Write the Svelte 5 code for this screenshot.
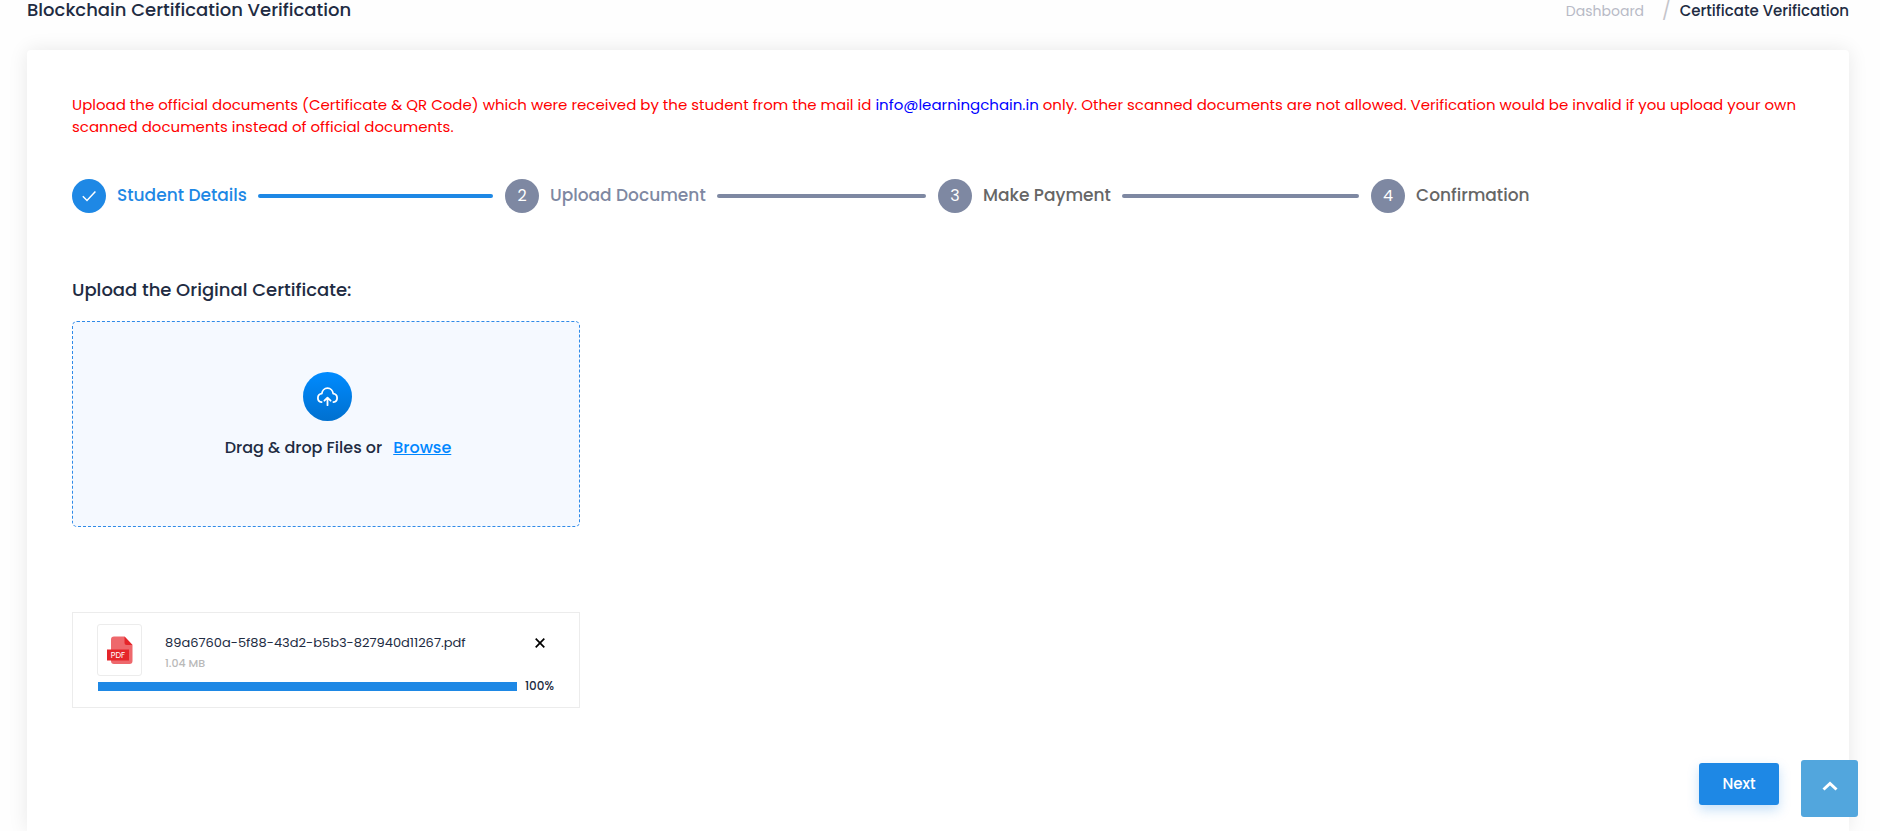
<script lang="ts">
	interface Step {
		label: string;
		state: 'done' | 'current' | 'todo';
	}

	const steps: Step[] = [
		{ label: 'Student Details', state: 'done' },
		{ label: 'Upload Document', state: 'current' },
		{ label: 'Make Payment', state: 'todo' },
		{ label: 'Confirmation', state: 'todo' }
	];

	let file = $state<{ name: string; size: string; progress: number } | null>({
		name: '89a6760a-5f88-43d2-b5b3-827940d11267.pdf',
		size: '1.04 MB',
		progress: 100
	});

	function handleFileChange(event: Event) {
		const picked = (event.currentTarget as HTMLInputElement).files?.[0];
		if (!picked) return;
		file = { name: picked.name, size: `${(picked.size / 1048576).toFixed(2)} MB`, progress: 100 };
	}

	function scrollToTop() {
		window.scrollTo({ top: 0, behavior: 'smooth' });
	}
</script>

<div class="page">
	<header>
		<h1>Blockchain Certification Verification</h1>
		<nav aria-label="Breadcrumb">
			<a href="#dashboard">Dashboard</a>
			<span class="slash">/</span>
			<span class="here">Certificate Verification</span>
		</nav>
	</header>

	<main class="card">
		<p class="notice">
			Upload the official documents (Certificate &amp; QR Code) which were received by the student from the mail id
			<a href="mailto:info@learningchain.in">info@learningchain.in</a> only. Other scanned documents are not allowed. Verification would be invalid if you upload your own scanned documents instead of official documents.
		</p>

		<ol class="steps">
			{#each steps as step, i}
				<li class={step.state}>
					<span class="dot">
						{#if step.state === 'done'}
							<svg width="16" height="16" viewBox="0 0 16 16" fill="none" stroke="#fff" stroke-width="1.5">
								<path d="M1.8 8.3l4.2 4.2 8.4-9" />
							</svg>
						{:else}
							{i + 1}
						{/if}
					</span>
					<span class="label">{step.label}</span>
					{#if i < steps.length - 1}
						<span class="line"></span>
					{/if}
				</li>
			{/each}
		</ol>

		<section class="upload">
			<h2>Upload the Original Certificate:</h2>
			<div class="dropzone">
				<svg class="cloud" width="49" height="49" viewBox="0 0 49 49" fill="none">
					<defs>
						<linearGradient id="cloud-bg" x1="0" y1="0" x2="0" y2="1">
							<stop offset="0" stop-color="#008bff" />
							<stop offset="1" stop-color="#0070cf" />
						</linearGradient>
					</defs>
					<circle cx="24.5" cy="24.5" r="24.5" fill="url(#cloud-bg)" />
					<g stroke="#fff" stroke-width="1.8" stroke-linecap="round" stroke-linejoin="round">
						<path d="M18.6 30.2c-2.2-.4-3.7-2.2-3.7-4.3 0-2.300 1.700-4.100 3.900-4.200.3-3.100 2.700-5.500 5.700-5.500s5.400 2.400 5.700 5.500c2.200.1 3.900 1.900 3.900 4.200 0 2.100-1.500 3.900-3.700 4.300" />
						<path d="M24.500 33.200v-7.200M21.400 28.700l3.100-3.100 3.100 3.100" />
					</g>
				</svg>
				<div class="prompt">
					<span>Drag &amp; drop Files or</span>
					<label>
						Browse
						<input type="file" accept="application/pdf" onchange={handleFileChange} />
					</label>
				</div>
			</div>

			{#if file}
				<div class="file">
					<div class="file-top">
						<span class="thumb">
							<svg width="26" height="28" viewBox="0 0 26 28">
								<path d="M7 0.500h10.500l8 8.500v16a3 3 0 0 1-3 3H7a3 3 0 0 1-3-3v-21.500a3 3 0 0 1 3-3z" fill="#ee686c" />
								<path d="M17.500 0.500l8 8.500h-6a2 2 0 0 1-2-2z" fill="#e5252a" />
								<rect y="13.500" width="22" height="11" fill="#e5252a" />
								<text x="11" y="22" text-anchor="middle" font-size="8" fill="#fff">PDF</text>
							</svg>
						</span>
						<div class="meta">
							<span class="name">{file.name}</span>
							<span class="size">{file.size}</span>
						</div>
						<button class="remove" type="button" aria-label={`Remove ${file.name}`} onclick={() => (file = null)}>
							<svg width="10" height="10" viewBox="0 0 10 10" stroke="#000" stroke-width="1.7">
								<path d="M0.700 0.700l8.600 8.600M9.300 0.700l-8.600 8.600" />
							</svg>
						</button>
					</div>
					<div class="file-progress">
						<div class="track">
							<div class="fill" style={`width:${file.progress}%`}></div>
						</div>
						<span>{file.progress}%</span>
					</div>
				</div>
			{/if}
		</section>

		<div class="actions">
			<button class="next" type="button">Next</button>
		</div>
	</main>

	<button class="to-top" type="button" aria-label="Back to top" onclick={scrollToTop}>
		<svg width="16" height="10" viewBox="0 0 16 10" fill="none" stroke="#fff" stroke-width="3">
			<path d="M1.500 8.500l6.500-6 6.500 6" />
		</svg>
	</button>
</div>

<style>
	:global(body) {
		margin: 0;
		background: #fefefe;
	}

	.page {
		box-sizing: border-box;
		min-height: 100vh;
		display: flex;
		flex-direction: column;
		padding: 0 31px 0 27px;
		font-family: Poppins, Inter, sans-serif;
		color: #212b42;
	}

	header {
		height: 50px;
		display: flex;
		justify-content: space-between;
		align-items: flex-start;
	}

	h1,
	h2 {
		margin: 0;
		font-size: 18px;
		font-weight: 500;
	}

	h1 {
		line-height: 20px;
	}

	nav {
		display: flex;
		align-items: center;
		font-size: 14px;
		line-height: 22px;
	}

	nav a {
		color: #b8bac6;
		text-decoration: none;
	}

	.slash {
		margin: 0 9px 0 18px;
		font-size: 18px;
		color: #c4c4ca;
	}

	.here {
		font-size: 15px;
		font-weight: 500;
	}

	.card {
		flex: 1;
		padding: 44px 45px 26px;
		background: #fff;
		border-radius: 4px 4px 0 0;
		box-shadow: 0 0 20px rgba(0, 0, 0, 0.09);
	}

	.notice {
		margin: 0 0 41px;
		font-size: 15px;
		line-height: 22px;
		color: #f00;
	}

	.notice a {
		color: #00f;
		text-decoration: none;
	}

	.steps {
		display: grid;
		grid-template-columns: repeat(4, 1fr);
		margin: 0 0 62px;
		padding: 0;
		list-style: none;
	}

	.steps li {
		display: flex;
		align-items: center;
		gap: 11px;
		padding-right: 12px;
		font-size: 17px;
		font-weight: 500;
		line-height: 24px;
		color: #666;
	}

	.steps .done {
		color: #1e88e5;
	}

	.steps .current {
		color: #7e88a2;
	}

	.dot {
		flex: none;
		width: 34px;
		height: 34px;
		display: grid;
		place-items: center;
		border-radius: 50%;
		background: #7e88a2;
		color: #fff;
		font-size: 16px;
		font-weight: 400;
	}

	.label {
		padding-bottom: 2px;
		white-space: nowrap;
	}

	.line {
		flex: 1;
		height: 4px;
		border-radius: 2px;
		background: #7e88a2;
	}

	.done .dot,
	.done .line {
		background: #1e88e5;
	}

	.upload {
		max-width: 508px;
	}

	h2 {
		margin-bottom: 16px;
		line-height: 30px;
	}

	.dropzone {
		box-sizing: border-box;
		min-height: 206px;
		display: flex;
		flex-direction: column;
		align-items: center;
		gap: 15px;
		padding: 50px 0 0 2px;
		border: 1px dashed #2f8ae8;
		border-radius: 5px;
		background: #f5f9ff;
	}

	.prompt {
		display: flex;
		gap: 11px;
		padding-left: 22px;
		font-size: 16px;
		font-weight: 500;
		line-height: 24px;
	}

	.prompt label {
		color: #0087ff;
		text-decoration: underline;
		cursor: pointer;
	}

	.prompt input {
		display: none;
	}

	.file {
		margin-top: 85px;
		padding: 11px 25px 11px 24px;
		border: 1px solid #ececec;
	}

	.file-top {
		display: flex;
		align-items: flex-start;
	}

	.thumb {
		box-sizing: border-box;
		width: 45px;
		height: 52px;
		display: grid;
		place-items: center;
		margin-right: 23px;
		border: 1px solid #ececec;
		border-radius: 3px;
	}

	.meta {
		flex: 1;
		display: grid;
		padding-top: 9px;
		line-height: 20px;
	}

	.name {
		font-size: 13px;
	}

	.size {
		font-size: 11px;
		font-weight: 500;
		color: #b9b9b9;
	}

	.remove {
		margin-top: 9px;
		padding: 5px 9px;
		border: none;
		background: none;
		line-height: 0;
		cursor: pointer;
	}

	.file-progress {
		display: flex;
		align-items: center;
		gap: 8px;
		padding-left: 1px;
		font-size: 12px;
		font-weight: 500;
		line-height: 20px;
	}

	.track {
		flex: 1;
		height: 9px;
	}

	.fill {
		height: 100%;
		background: #1e88e5;
	}

	.actions {
		display: flex;
		justify-content: flex-end;
		margin-top: 55px;
		padding-right: 25px;
	}

	.next {
		width: 80px;
		height: 42px;
		border: none;
		border-radius: 3px;
		background: #1e88e5;
		box-shadow: 0 5px 12px rgba(30, 136, 229, 0.25);
		color: #fff;
		font: 500 15px/22px Poppins, Inter, sans-serif;
		cursor: pointer;
	}

	.to-top {
		position: fixed;
		right: 22px;
		bottom: 14px;
		width: 57px;
		height: 57px;
		display: grid;
		place-items: center;
		padding: 0 0 5px;
		border: none;
		border-radius: 3px;
		background: #52a6dd;
		cursor: pointer;
	}
</style>
